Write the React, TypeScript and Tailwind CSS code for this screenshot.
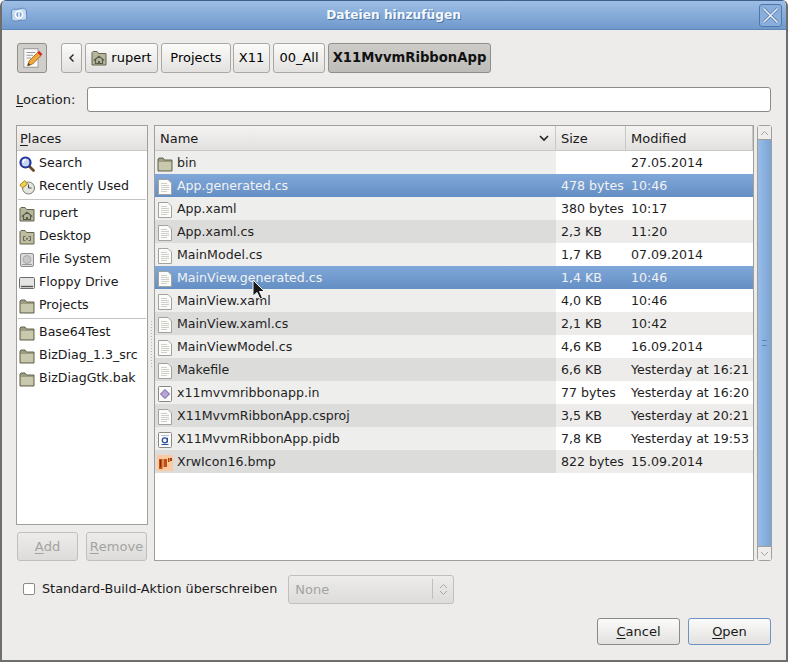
import type { ReactNode } from "react";

function DocIcon() {
  return (
    <svg width="16" height="16" viewBox="0 0 16 16" className="shrink-0">
      <path d="M1.500 0.500h9.500l3.500 3.500v11.500h-13z" fill="#fbfbf9" stroke="#a3a39d" />
      <path d="M4 4.500h6M4 6.500h8M4 8.500h8M4 10.500h8M4 12.500h6" stroke="#cfcfc9" strokeWidth="1" fill="none" />
    </svg>
  );
}

function FolderIcon() {
  return (
    <svg width="16" height="16" viewBox="0 0 16 16" className="shrink-0">
      <path d="M1 15V3l1-1h4l1.500 2H15v11z" fill="#9d9d83" stroke="#65654f" strokeLinejoin="round" />
      <path d="M1.800 6h12.400v8.200H1.800z" fill="#c8c8ac" />
    </svg>
  );
}

function HomeFolderIcon() {
  return (
    <svg width="16" height="16" viewBox="0 0 16 16" className="shrink-0">
      <path d="M1 15V2.500l1-1h4l1.500 2H15V15z" fill="#b6b69d" stroke="#65654f" strokeLinejoin="round" />
      <path d="M2.800 10.500L8 6.200l5.200 4.300M4.500 9.800v3.700h7V9.800" fill="none" stroke="#5a5a4c" strokeWidth="1.200" />
      <path d="M7 11h2v2.500H7z" fill="#5a5a4c" />
    </svg>
  );
}

function DesktopIcon() {
  return (
    <svg width="16" height="16" viewBox="0 0 16 16" className="shrink-0">
      <path d="M1 15V2.500l1-1h4l1.500 2H15V15z" fill="#bdbda0" stroke="#65654f" strokeLinejoin="round" />
      <path d="M4.500 7.500h2M9.500 7.500h2M4.500 7.500v4h2M11.500 7.500v4h-2" fill="none" stroke="#66665a" />
      <path d="M7 9h2v1.500H7z" fill="#66665a" />
    </svg>
  );
}

function SearchIcon() {
  return (
    <svg width="16" height="16" viewBox="0 0 16 16" className="shrink-0">
      <path d="M10 10l4.500 4.500" stroke="#6b4a22" strokeWidth="2.800" strokeLinecap="round" />
      <circle cx="6.500" cy="6.500" r="5" fill="#c9d6f2" stroke="#23349a" strokeWidth="2.200" />
      <path d="M4 6.500a3 3 0 0 1 3-3" fill="none" stroke="#fff" strokeWidth="1.400" />
    </svg>
  );
}

function RecentIcon() {
  return (
    <svg width="16" height="16" viewBox="0 0 16 16" className="shrink-0">
      <circle cx="9.500" cy="9" r="6" fill="#e6e6e0" stroke="#77776f" />
      <path d="M9.500 5.500V9h3" fill="none" stroke="#444" />
      <path d="M0.800 6l5-4.500L8.500 5l-5 4z" fill="#f0d050" stroke="#a08820" />
    </svg>
  );
}

function DriveIcon() {
  return (
    <svg width="16" height="16" viewBox="0 0 16 16" className="shrink-0">
      <rect x="1.500" y="1.500" width="13" height="13" rx="1.500" fill="#dcdcdc" stroke="#8d8d8d" />
      <circle cx="8" cy="7.500" r="4" fill="#c6c6c6" stroke="#aaa" />
      <path d="M3 12.500h10" stroke="#9a9a9a" />
    </svg>
  );
}

function FloppyIcon() {
  return (
    <svg width="16" height="16" viewBox="0 0 16 16" className="shrink-0">
      <rect x="0.500" y="2.500" width="15" height="11" rx="1" fill="#e4e4e4" stroke="#6c6c6c" />
      <path d="M2 11.500h12" stroke="#55554f" strokeWidth="1.400" />
    </svg>
  );
}

function IniIcon() {
  return (
    <svg width="16" height="16" viewBox="0 0 16 16" className="shrink-0">
      <rect x="1.500" y="0.500" width="13" height="15" rx="1" fill="#fbfbf9" stroke="#8a8a84" />
      <path d="M8 3.500l4.500 4.500L8 12.500 3.500 8z" fill="#b9a4d8" stroke="#6f5a98" />
    </svg>
  );
}

function PidbIcon() {
  return (
    <svg width="16" height="16" viewBox="0 0 16 16" className="shrink-0">
      <rect x="1.500" y="0.500" width="13" height="15" rx="1" fill="#fbfbf9" stroke="#8a8a84" />
      <path d="M4 3.500h8" stroke="#b5c0d8" />
      <circle cx="7.800" cy="8.300" r="2.500" fill="none" stroke="#2c4f9e" strokeWidth="1.300" />
      <path d="M10.500 5.800v4.700M4.500 12.500h7" stroke="#2c4f9e" />
    </svg>
  );
}

function BmpIcon() {
  return (
    <svg width="16" height="16" viewBox="0 0 16 16" className="shrink-0">
      <rect width="16" height="16" fill="#fbc9a2" />
      <path d="M2 4h3.500v10H2zM6.500 4H10v8H6.500z" fill="#c2500e" />
      <path d="M11 3h1.500v4H11zM13 3h2v3h-2z" fill="#a8410a" />
      <path d="M3 5h1v7H3z" fill="#7c2d06" />
    </svg>
  );
}

function EditIcon() {
  return (
    <svg width="22" height="22" viewBox="0 0 20 20">
      <path d="M2.500 1.500h13v17h-13z" fill="#fafafa" stroke="#a5a5a5" />
      <path d="M5 5h8M5 7.500h6M5 10h4" stroke="#9a9a9a" />
      <path d="M6 17l1.500-4.500L15 5l3 3-7.500 7.500z" fill="#f0a63c" stroke="#a0651c" strokeWidth="0.800" />
      <path d="M15 5l1.500-1.500 3 3L18 8z" fill="#d8262a" />
      <path d="M6 17l.7-2.600 1.900 1.900z" fill="#4a3a2a" />
    </svg>
  );
}

function AppIcon() {
  return (
    <svg width="18" height="16" viewBox="0 0 18 16">
      <path d="M1.500 4C3 1 6 3 9 2s6-1.500 7.500 2c-.5 3 1 5 0 8-2 2.500-4.500.5-7.500 1.500s-5.500 1-7.500-1.500c1-3-.5-5 0-8z" fill="#c6daf0" stroke="#5c86b8" />
      <circle cx="9" cy="7.500" r="3.500" fill="#7fa6d6" stroke="#fff" strokeWidth="1.600" />
      <path d="M9 5v5" stroke="#fff" strokeWidth="1.400" />
    </svg>
  );
}

function Accel({ children }: { children: ReactNode }) {
  return <span className="underline underline-offset-2">{children}</span>;
}

function PathButton({ children, className }: { children: ReactNode; className: string }) {
  return (
    <div
      className={`flex h-[30px] items-center justify-center gap-1 rounded-[3px] border border-[#a8a8a4] bg-gradient-to-b from-[#fbfbfa] to-[#e2e1df] pb-[1px] ${className}`}
    >
      {children}
    </div>
  );
}

function PlaceRow({ icon, label }: { icon: ReactNode; label: string }) {
  return (
    <div className="flex h-[23px] items-center gap-[4px] overflow-hidden whitespace-nowrap pl-[2px] pt-[2px] text-[12.6px] text-[#1a1a1a]">
      {icon}
      <span>{label}</span>
    </div>
  );
}

function PlaceSeparator() {
  return <div className="mx-[1px] mb-[1px] mt-[2px] h-[1px] shrink-0 bg-[#c4c4c2]" />;
}

const files = [
  { icon: <FolderIcon />, name: "bin", size: "", date: "27.05.2014" },
  { icon: <DocIcon />, name: "App.generated.cs", size: "478 bytes", date: "10:46", selected: true },
  { icon: <DocIcon />, name: "App.xaml", size: "380 bytes", date: "10:17" },
  { icon: <DocIcon />, name: "App.xaml.cs", size: "2,3 KB", date: "11:20" },
  { icon: <DocIcon />, name: "MainModel.cs", size: "1,7 KB", date: "07.09.2014" },
  { icon: <DocIcon />, name: "MainView.generated.cs", size: "1,4 KB", date: "10:46", selected: true },
  { icon: <DocIcon />, name: "MainView.xaml", size: "4,0 KB", date: "10:46" },
  { icon: <DocIcon />, name: "MainView.xaml.cs", size: "2,1 KB", date: "10:42" },
  { icon: <DocIcon />, name: "MainViewModel.cs", size: "4,6 KB", date: "16.09.2014" },
  { icon: <DocIcon />, name: "Makefile", size: "6,6 KB", date: "Yesterday at 16:21" },
  { icon: <IniIcon />, name: "x11mvvmribbonapp.in", size: "77 bytes", date: "Yesterday at 16:20" },
  { icon: <DocIcon />, name: "X11MvvmRibbonApp.csproj", size: "3,5 KB", date: "Yesterday at 20:21" },
  { icon: <PidbIcon />, name: "X11MvvmRibbonApp.pidb", size: "7,8 KB", date: "Yesterday at 19:53" },
  { icon: <BmpIcon />, name: "XrwIcon16.bmp", size: "822 bytes", date: "15.09.2014" },
];

function FileRow({ file, odd }: { file: (typeof files)[number]; odd: boolean }) {
  if (file.selected) {
    return (
      <div className="flex h-[23px] items-center whitespace-nowrap bg-gradient-to-b from-[#80a7d9] to-[#648fc4] pt-[2px] text-[12.6px] text-[#f2f2f2]">
        <div className="flex w-[401px] items-center gap-[4px] pl-[2px]">
          {file.icon}
          <span>{file.name}</span>
        </div>
        <div className="w-[70px] pl-[5px]">{file.size}</div>
        <div className="pl-[5px]">{file.date}</div>
      </div>
    );
  }
  return (
    <div className={`flex h-[23px] items-center whitespace-nowrap text-[12.6px] text-[#1f1f1f] ${odd ? "bg-[#edecea]" : "bg-white"}`}>
      <div className={`flex h-full w-[401px] items-center gap-[4px] pl-[2px] pt-[2px] ${odd ? "bg-[#dcdcdb]" : "bg-[#eeeeed]"}`}>
        {file.icon}
        <span>{file.name}</span>
      </div>
      <div className="w-[70px] pl-[5px] pt-[2px]">{file.size}</div>
      <div className="pl-[5px] pt-[2px]">{file.date}</div>
    </div>
  );
}

export default function App() {
  return (
    <div className="flex h-[662px] w-[788px] flex-col overflow-hidden rounded-t-[6px] border-x-2 border-b-2 border-[#6e6e6c] bg-[#edecea] font-['DejaVu_Sans',sans-serif] text-[13px] leading-none">
      {/* title bar */}
      <div className="flex h-[30px] shrink-0 items-center justify-between border-y border-t-[#3f5f8f] border-b-[#5f86b8] bg-gradient-to-b from-[#9dbee5] to-[#6f99cc] pl-[8px] pr-[4px]">
        <AppIcon />
        <span className="text-[12.2px] font-bold text-[#f4f8fc] [text-shadow:1px_1px_0_#4f77a8]">Dateien hinzufügen</span>
        <div className="flex h-[23px] w-[23px] items-center justify-center rounded-[3px] border border-[#4f77a8] bg-[#89aedb]">
          <svg width="17" height="17" viewBox="0 0 17 17">
            <path d="M1.500 1.500l14 14M15.500 1.500l-14 14" stroke="#4f77a8" strokeWidth="3" />
            <path d="M1.500 1.500l14 14M15.500 1.500l-14 14" stroke="#eef3fa" strokeWidth="1.500" />
          </svg>
        </div>
      </div>

      <div className="flex min-h-0 flex-1 flex-col pl-[14px] pr-[15px]">
        {/* path bar */}
        <div className="mt-[13px] flex h-[30px] items-center pl-[1px]">
          <div className="flex h-[30px] w-[30px] items-center justify-center rounded-[3px] border border-[#8e8e8a] bg-[#cfcecb]">
            <EditIcon />
          </div>
          <div className="ml-[14px] flex gap-[3px]">
            <PathButton className="w-[21px]">
              <svg width="8" height="10" viewBox="0 0 8 10">
                <path d="M5.500 1.500L2 5l3.500 3.500" fill="none" stroke="#222" strokeWidth="1.400" />
              </svg>
            </PathButton>
            <PathButton className="w-[73px]">
              <HomeFolderIcon />
              <span>rupert</span>
            </PathButton>
            <PathButton className="w-[70px]">Projects</PathButton>
            <PathButton className="-ml-[1px] w-[37px]">X11</PathButton>
            <PathButton className="w-[52px]">00_All</PathButton>
            <div className="flex h-[30px] w-[163px] items-center justify-center rounded-[3px] border border-[#8e8e8a] bg-gradient-to-b from-[#cdccc9] to-[#bdbcb8] text-[13.2px] font-bold text-[#111]">
              X11MvvmRibbonApp
            </div>
          </div>
        </div>

        {/* location */}
        <div className="mt-[14px] flex h-[25px] items-center">
          <span className="w-[71px] text-[#1a1a1a]">
            <Accel>L</Accel>ocation:
          </span>
          <div className="h-[25px] w-[684px] rounded-[3px] border border-[#8a8a86] bg-white" />
        </div>

        {/* main panes */}
        <div className="mt-[13px] flex h-[436px]">
          <div className="flex w-[132px] flex-col">
            <div className="flex h-[400px] w-[132px] flex-col border border-[#9f9f9c] bg-white">
              <div className="flex h-[25px] shrink-0 items-center border-b border-[#c8c8c5] bg-gradient-to-b from-[#f4f3f2] to-[#e2e1df] pl-[3px] text-[#1a1a1a]">
                <Accel>P</Accel>laces
              </div>
              <PlaceRow icon={<SearchIcon />} label="Search" />
              <PlaceRow icon={<RecentIcon />} label="Recently Used" />
              <PlaceSeparator />
              <PlaceRow icon={<HomeFolderIcon />} label="rupert" />
              <PlaceRow icon={<DesktopIcon />} label="Desktop" />
              <PlaceRow icon={<DriveIcon />} label="File System" />
              <PlaceRow icon={<FloppyIcon />} label="Floppy Drive" />
              <PlaceRow icon={<FolderIcon />} label="Projects" />
              <PlaceSeparator />
              <PlaceRow icon={<FolderIcon />} label="Base64Test" />
              <PlaceRow icon={<FolderIcon />} label="BizDiag_1.3_src" />
              <PlaceRow icon={<FolderIcon />} label="BizDiagGtk.bak" />
            </div>
            <div className="mt-[7px] flex gap-[8px] pl-[1px]">
              <div className="flex h-[29px] w-[61px] shrink-0 items-center justify-center rounded-[3px] border border-[#c0bfbc] bg-gradient-to-b from-[#edecea] to-[#dddcda] text-[#a3a3a1]">
                <Accel>A</Accel>dd
              </div>
              <div className="flex h-[29px] w-[61px] shrink-0 items-center justify-center rounded-[3px] border border-[#c0bfbc] bg-gradient-to-b from-[#edecea] to-[#dddcda] text-[#a3a3a1]">
                <Accel>R</Accel>emove
              </div>
            </div>
          </div>

          {/* resize grip */}
          <div className="flex w-[6px] shrink-0 items-center justify-center pt-[1px]">
            <div className="h-[48px] w-[3px] bg-[radial-gradient(#b4b4b0_1px,transparent_1px)] bg-[length:3px_3px]" />
          </div>

          <div className="flex w-[600px] shrink-0 flex-col border border-[#9f9f9c] bg-white">
            <div className="flex h-[25px] shrink-0 items-center border-b border-[#c8c8c5] bg-gradient-to-b from-[#f4f3f2] to-[#e2e1df] text-[#1a1a1a]">
              <div className="flex h-full w-[401px] items-center justify-between border-r border-[#c8c8c5] pl-[5px] pr-[6px]">
                <span>Name</span>
                <svg width="10" height="8" viewBox="0 0 10 8">
                  <path d="M1 2l4 4 4-4" fill="none" stroke="#222" strokeWidth="1.600" />
                </svg>
              </div>
              <div className="flex h-full w-[70px] items-center border-r border-[#c8c8c5] pl-[5px]">Size</div>
              <div className="flex h-full w-[127px] items-center border-r border-[#c8c8c5] pl-[5px]">Modified</div>
            </div>
            {files.map((f, i) => (
              <FileRow key={f.name} file={f} odd={i % 2 === 1} />
            ))}
          </div>

          {/* scrollbar */}
          <div className="ml-[3px] flex w-[15px] shrink-0 flex-col rounded-[3px] border border-[#9f9f9c] bg-[#dcdbd8]">
            <div className="flex h-[14px] shrink-0 items-center justify-center border-b border-[#9f9f9c] bg-[#eeedeb]">
              <svg width="9" height="6" viewBox="0 0 9 6">
                <path d="M1 5l3.500-3.500L8 5" fill="none" stroke="#a5a5a2" />
              </svg>
            </div>
            <div className="flex flex-1 items-center justify-center bg-gradient-to-r from-[#9abce6] to-[#7aa3d6]">
              <div className="h-[6px] w-[5px] border-y border-[#5c86b8]" />
            </div>
            <div className="flex h-[14px] shrink-0 items-center justify-center border-t border-[#9f9f9c] bg-[#eeedeb]">
              <svg width="9" height="6" viewBox="0 0 9 6">
                <path d="M1 1l3.500 3.500L8 1" fill="none" stroke="#a5a5a2" />
              </svg>
            </div>
          </div>
        </div>

        {/* build action */}
        <div className="mt-[14px] flex h-[28px] items-center">
          <div className="ml-[7px] h-[12px] w-[12px] rounded-[2px] border border-[#8a8a86] bg-white" />
          <span className="ml-[7px] text-[12.8px] text-[#1a1a1a]">Standard-Build-Aktion überschreiben</span>
          <div className="ml-[11px] flex h-[29px] w-[166px] items-center rounded-[3px] border border-[#c0bfbc] bg-gradient-to-b from-[#edecea] to-[#dddcda] pl-[6px] text-[#a3a3a1]">
            <span className="w-[137px]">None</span>
            <div className="flex h-[20px] flex-1 items-center justify-center border-l border-[#c0bfbc]">
              <svg width="9" height="13" viewBox="0 0 9 13">
                <path d="M1 5l3.500-3.500L8 5M1 8l3.500 3.500L8 8" fill="none" stroke="#a5a5a2" />
              </svg>
            </div>
          </div>
        </div>

        {/* actions */}
        <div className="mt-[15px] flex justify-end gap-[8px]">
          <div className="flex h-[27px] w-[83px] items-center justify-center rounded-[3px] border border-[#8a8a86] bg-gradient-to-b from-[#fbfbfa] to-[#e2e1df] text-[#1a1a1a]">
            <Accel>C</Accel>ancel
          </div>
          <div className="flex h-[27px] w-[83px] items-center justify-center rounded-[3px] border border-[#6c93c4] bg-gradient-to-b from-[#fbfbfa] to-[#e2e1df] text-[#1a1a1a]">
            <Accel>O</Accel>pen
          </div>
        </div>
      </div>

      {/* mouse pointer over the list */}
      <div className="pointer-events-none absolute left-[252px] top-[279px]">
        <svg width="14" height="22" viewBox="0 0 14 22">
          <path d="M1 1v16l4-3.500 3 6.500 2.500-1-3-6.500h5z" fill="#1a1a1a" stroke="#f5f5f5" />
        </svg>
      </div>
    </div>
  );
}
